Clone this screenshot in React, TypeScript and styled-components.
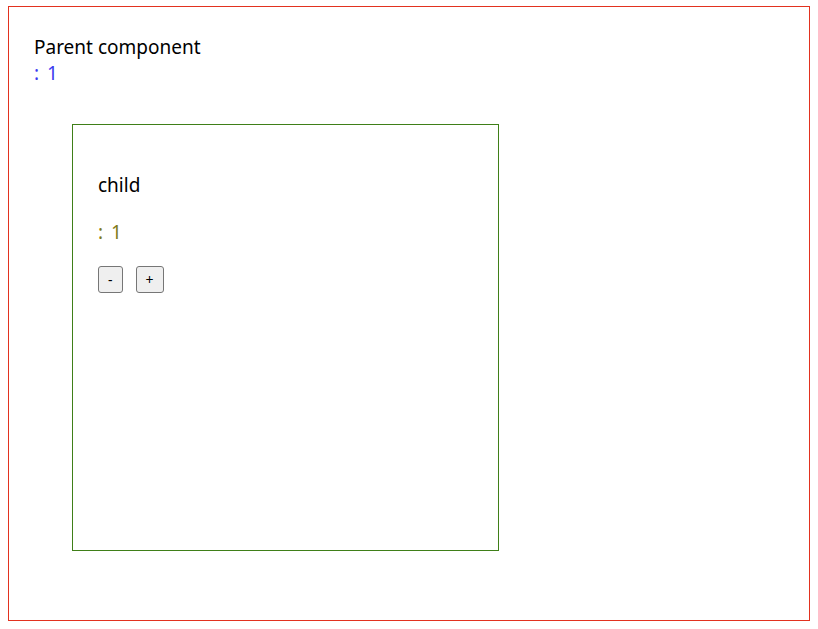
import { useState } from 'react'
import styled, { createGlobalStyle } from 'styled-components'

const GlobalStyle = createGlobalStyle`
    body {
        margin: 6px 8px 8px;
        font-family: 'Noto Sans', 'Noto Sans CJK KR', sans-serif;
        color: #000;
    }
`

const StyledParent = styled.div`
    border: 1px solid #e2321f;
    padding: 27px 25px 25px;
    height: 561px;
`

const StyledTitle = styled.div`
    font-size: 19px;
    line-height: 26px;
`

const StyledCount = styled.div<{ $color: string }>`
    font-size: 19px;
    line-height: 26px;
    word-spacing: 3px;
    color: ${(p) => p.$color};
`

const StyledChild = styled.div`
    margin: 38px 0 0 38px;
    width: 375px;
    height: 375px;
    padding: 25px;
    border: 1px solid #3f7f18;
`

const StyledChildTitle = styled.div`
    font-size: 19px;
    line-height: 26px;
    margin-top: 22px;
`

const StyledChildCount = styled(StyledCount)`
    margin-top: 21px;
`

const StyledButtons = styled.div`
    display: flex;
    gap: 13px;
    margin-top: 21px;
`

const StyledButton = styled.button`
    height: 27px;
    min-width: 24px;
    padding: 0 9px;
    font-family: 'Noto Sans', sans-serif;
    font-size: 14px;
    background: #efefef;
    border: 1px solid #767676;
    border-radius: 3px;
    color: #000;
`

function Child({ count, onChange }: { count: number; onChange: (n: number) => void }) {
    return (
        <StyledChild>
            <StyledChildTitle>child</StyledChildTitle>
            <StyledChildCount $color='#807a1a'>: {count}</StyledChildCount>
            <StyledButtons>
                <StyledButton onClick={() => onChange(count - 1)}>-</StyledButton>
                <StyledButton onClick={() => onChange(count + 1)}>+</StyledButton>
            </StyledButtons>
        </StyledChild>
    )
}

function App() {
    const [count, setCount] = useState(1)

    return (
        <>
            <GlobalStyle />
            <StyledParent>
                <StyledTitle>Parent component</StyledTitle>
                <StyledCount $color='#3b3bf0'>: {count}</StyledCount>
                <Child count={count} onChange={setCount} />
            </StyledParent>
        </>
    )
}

export default App
